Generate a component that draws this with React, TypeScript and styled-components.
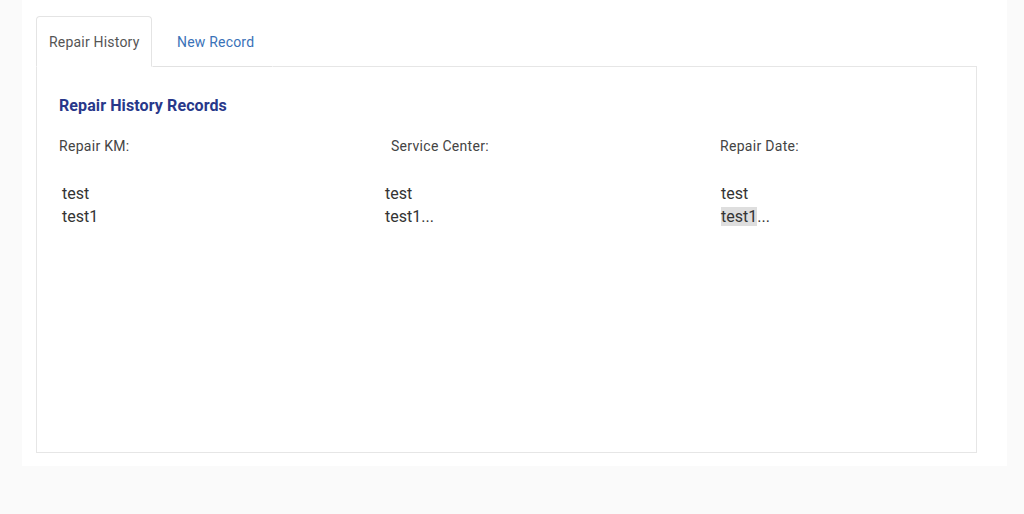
import React from "react";
import styled, { createGlobalStyle } from "styled-components";

const Global = createGlobalStyle`
  html, body { margin: 0; padding: 0; background: #fafafa; }
  body { font-family: Roboto, "Liberation Sans", sans-serif; }
  * { box-sizing: border-box; }
`;

const Page = styled.div`
  padding: 0 17px 0 22px;
  height: 514px;
`;

const Card = styled.div`
  background: #ffffff;
  height: 466px;
  padding: 16px 30px 13px 14px;
  display: flex;
  flex-direction: column;
`;

const TabBar = styled.div`
  display: flex;
  height: 50px;
  align-items: stretch;
`;

const Tab = styled.button<{ $active?: boolean }>`
  font-family: inherit;
  font-size: 14px;
  letter-spacing: 0.2px;
  white-space: nowrap;
  background: #fff;
  cursor: pointer;
  text-align: left;
  padding: 0 0 0 ${(p) => (p.$active ? "12px" : "24px")};
  width: ${(p) => (p.$active ? "116px" : "121px")};
  color: ${(p) => (p.$active ? "#555" : "#3a72b8")};
  border: 1px solid ${(p) => (p.$active ? "#e4e4e4" : "transparent")};
  border-bottom: 1px solid ${(p) => (p.$active ? "#fff" : "#e2e2e2")};
  border-radius: ${(p) => (p.$active ? "4px 4px 0 0" : "0")};
  margin-bottom: -1px;
  position: relative;
  z-index: 1;
`;

const Panel = styled.div`
  flex: 1;
  border: 1px solid #e6e6e6;
  padding: 28px 22px;
`;

const Title = styled.h3`
  margin: 0;
  font-size: 16px;
  font-weight: 700;
  letter-spacing: 0.1px;
  color: #28388a;
  line-height: 22px;
`;

const LabelRow = styled.div`
  display: grid;
  grid-template-columns: 332px 329px 1fr;
  margin-top: 19px;
  font-size: 14px;
  letter-spacing: 0.3px;
  color: #444;
  line-height: 20px;
`;

const DataRow = styled.div<{ $first?: boolean }>`
  display: grid;
  grid-template-columns: 323px 336px 1fr;
  padding-left: 3px;
  margin-top: ${(p) => (p.$first ? "26px" : "0")};
  font-size: 16px;
  color: #333;
  line-height: 23px;
`;

const Mark = styled.span`
  background: #dedede;
`;

export default function App() {
  return (
    <>
      <Global />
      <Page>
        <Card>
          <TabBar>
            <Tab $active>Repair History</Tab>
            <Tab>New Record</Tab>
          </TabBar>
          <Panel>
            <Title>Repair History Records</Title>
            <LabelRow>
              <span>Repair KM:</span>
              <span>Service Center:</span>
              <span>Repair Date:</span>
            </LabelRow>
            <DataRow $first>
              <span>test</span>
              <span>test</span>
              <span>test</span>
            </DataRow>
            <DataRow>
              <span>test1</span>
              <span>test1...</span>
              <span>
                <Mark>test1</Mark>...
              </span>
            </DataRow>
          </Panel>
        </Card>
      </Page>
    </>
  );
}
